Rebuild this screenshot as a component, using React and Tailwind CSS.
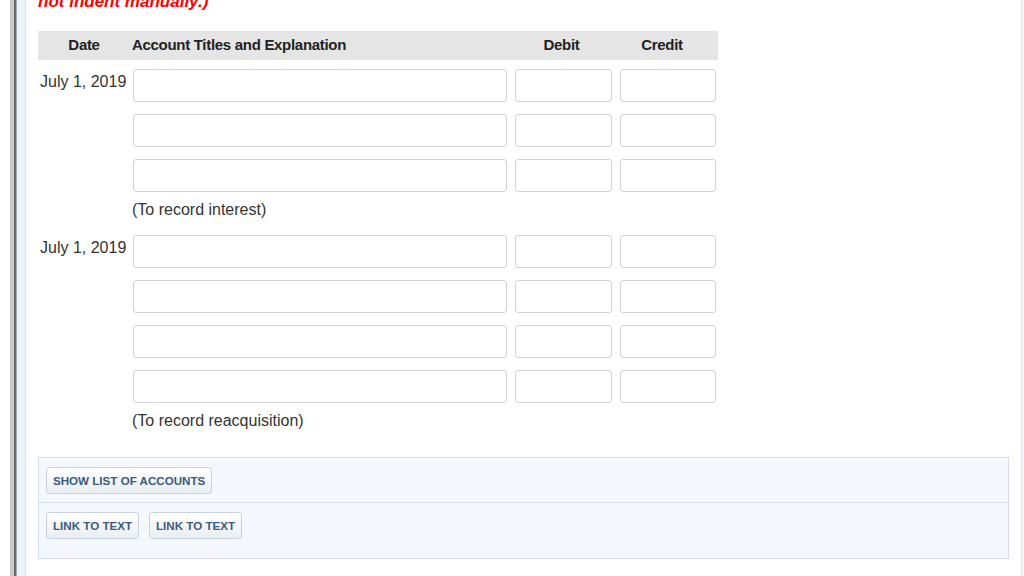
import React from 'react';

const font = { fontFamily: '"Liberation Sans", Arial, sans-serif' };

const Field = ({ w }) => (
  <div className={`h-[33px] ${w} rounded-[3px] border border-[#d3d3d3] bg-white`} />
);

const EntryRow = ({ date }) => (
  <div className="flex h-[33px] mb-[12px]">
    <div className="w-[95px] pl-[2px] pt-[3px] text-[16px] leading-[20px] text-[#333]">{date}</div>
    <Field w="w-[374px]" />
    <div className="w-[8px]" />
    <Field w="w-[97px]" />
    <div className="w-[8px]" />
    <Field w="w-[96px]" />
  </div>
);

const Note = ({ children }) => (
  <div className="pl-[94px] -mt-[4px] mb-[15px] text-[16px] leading-[20px] text-[#333]">{children}</div>
);

const PanelButton = ({ children }) => (
  <button className="h-[27px] px-[6px] rounded-[3px] border border-[#c9d2dc] bg-gradient-to-b from-white to-[#e9eef3] text-[11.6px] font-bold text-[#3b5a82] leading-none">
    {children}
  </button>
);

export default function App() {
  return (
    <div className="flex w-[1024px] h-[576px] overflow-hidden bg-white" style={font}>
      <div className="w-[10px] shrink-0 bg-white" />
      <div className="w-[4px] shrink-0 bg-[#cacaca]" />
      <div className="w-[2px] shrink-0 bg-[#6a6a6a]" />
      <div className="w-[1px] shrink-0 bg-[#a8a8a8]" />
      <div className="w-[9px] shrink-0 bg-[#eef3f9] border-r border-[#dbe3ec]" />

      <div className="flex-1 px-[12px] bg-white border-r border-[#dbe3ec]">
        <div className="-mt-[10px] text-[17px] leading-[24px] font-bold italic text-[#ff0000]">
          not indent manually.)
        </div>

        <div className="w-[680px] mt-[17px]">
          <div className="flex h-[29px] items-center bg-[#e5e5e5] text-[15px] font-bold tracking-[-0.3px] text-[#222]">
            <div className="w-[92px] text-center">Date</div>
            <div className="w-[383px] pl-[2px]">Account Titles and Explanation</div>
            <div className="w-[97px] text-center">Debit</div>
            <div className="w-[104px] text-center">Credit</div>
          </div>

          <div className="mt-[9px]">
            <EntryRow date="July 1, 2019" />
            <EntryRow />
            <EntryRow />
            <Note>(To record interest)</Note>

            <EntryRow date="July 1, 2019" />
            <EntryRow />
            <EntryRow />
            <EntryRow />
            <Note>(To record reacquisition)</Note>
          </div>
        </div>

        <div className="mt-[26px] border border-[#d5dee8] bg-[#f4f7fb]">
          <div className="h-[45px] pl-[7px] pt-[9px] border-b border-[#d5dee8]">
            <PanelButton>SHOW LIST OF ACCOUNTS</PanelButton>
          </div>
          <div className="h-[55px] pl-[7px] pt-[9px] flex gap-[10px] items-start">
            <PanelButton>LINK TO TEXT</PanelButton>
            <PanelButton>LINK TO TEXT</PanelButton>
          </div>
        </div>
      </div>
      <div className="w-[2px] shrink-0 bg-[#f4f7fb]" />
    </div>
  );
}
